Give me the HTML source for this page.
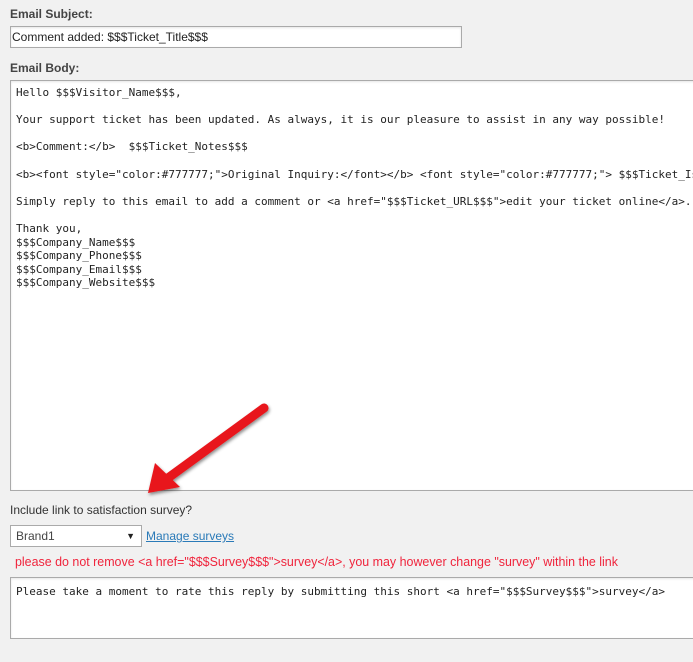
<!DOCTYPE html>
<html><head><style>
body{margin:0;width:693px;height:662px;background:#f1f1f1;font-family:"Liberation Sans",Arial,sans-serif;font-size:12px;color:#333;position:relative;overflow:hidden}
.a{position:absolute}
.lbl{font-weight:bold;color:#444;font-size:12px}
.box{background:#fff;border:1px solid #aaa;box-shadow:inset 0 1px 2px rgba(0,0,0,.1);box-sizing:border-box}
pre{margin:0;font-family:"DejaVu Sans Mono","Liberation Mono",monospace;font-size:11px;line-height:13.6px;color:#222}
</style></head><body>
<div class="a lbl" style="left:10px;top:7px">Email Subject:</div>
<div class="a box" style="left:10px;top:26px;width:452px;height:22px;padding:2px 1px;font-size:12px;color:#222;line-height:16px">Comment added: $$$Ticket_Title$$$</div>
<div class="a lbl" style="left:10px;top:61px">Email Body:</div>
<div class="a box" style="left:10px;top:80px;width:700px;height:411px;padding:5px 5px;overflow:hidden"><pre>Hello $$$Visitor_Name$$$,

Your support ticket has been updated. As always, it is our pleasure to assist in any way possible!

&lt;b&gt;Comment:&lt;/b&gt;  $$$Ticket_Notes$$$

&lt;b&gt;&lt;font style="color:#777777;"&gt;Original Inquiry:&lt;/font&gt;&lt;/b&gt; &lt;font style="color:#777777;"&gt; $$$Ticket_Issue$$$&lt;/font&gt;

Simply reply to this email to add a comment or &lt;a href="$$$Ticket_URL$$$"&gt;edit your ticket online&lt;/a&gt;.

Thank you,
$$$Company_Name$$$
$$$Company_Phone$$$
$$$Company_Email$$$
$$$Company_Website$$$</pre></div>
<svg class="a" style="left:0;top:0" width="693" height="662">
<defs><filter id="s"><feDropShadow dx="1" dy="2" stdDeviation="1.5" flood-opacity=".45"/></filter></defs>
<g filter="url(#s)">
<line x1="264" y1="408" x2="168" y2="478" stroke="#e8141a" stroke-width="9" stroke-linecap="round"/>
<polygon points="148,493 155,463 180,487" fill="#e8141a"/>
</g></svg>
<div class="a" style="left:10px;top:503px;font-size:12px;color:#333">Include link to satisfaction survey?</div>
<div class="a box" style="left:10px;top:525px;width:132px;height:22px;padding:3px 5px;color:#444;line-height:15px;box-shadow:none">Brand1<span style="position:absolute;right:6px;top:3px;font-size:9px;color:#222">▼</span></div>
<div class="a" style="left:146px;top:529px;color:#2a7ab8;text-decoration:underline">Manage surveys</div>
<div class="a" style="left:15px;top:555px;color:#f0243c;font-size:12.45px">please do not remove &lt;a href="$$$Survey$$$"&gt;survey&lt;/a&gt;, you may however change "survey" within the link</div>
<div class="a box" style="left:10px;top:577px;width:700px;height:62px;padding:7px 5px"><pre>Please take a moment to rate this reply by submitting this short &lt;a href="$$$Survey$$$"&gt;survey&lt;/a&gt;</pre></div>
</body></html>
